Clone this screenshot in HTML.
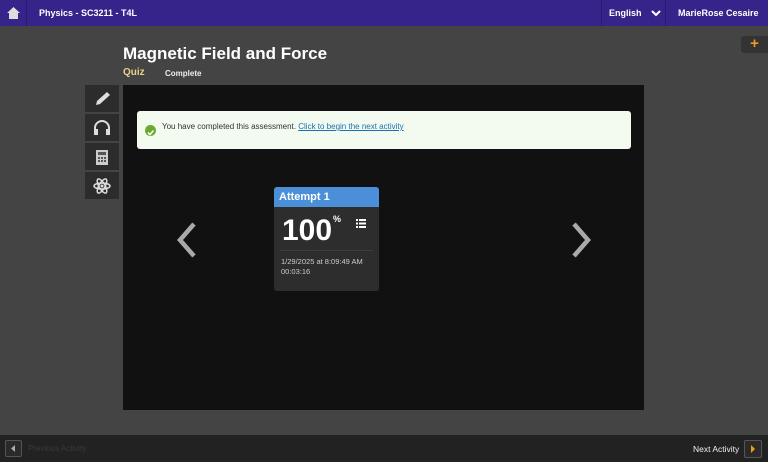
<!DOCTYPE html>
<html><head><style>
*{margin:0;padding:0;box-sizing:border-box}
body{width:768px;height:462px;background:#444;font-family:"Liberation Sans",sans-serif;position:relative;overflow:hidden}
.top{position:absolute;left:0;top:0;width:768px;height:26px;background:#36248a;color:#fff;font-size:9px;font-weight:bold}
.top div{position:absolute;top:0;height:26px;line-height:26px}
.sep{border-left:1px solid #2a1a70}
.abs{position:absolute}
.tool{position:absolute;left:85px;width:34px;height:28px;background:#2c2c2c;border-bottom:1px solid #444}
.bot{position:absolute;left:0;top:435px;width:768px;height:27px;background:#222}
</style></head><body>
<div class="top">
<div style="left:0;width:27px;border-right:1px solid #2a1a70"><svg width="27" height="26"><path d="M7 13 L13.5 7 L20 13 L18 13 L18 19 L9 19 L9 13Z" fill="#ddd"/></svg></div>
<div style="left:39px">Physics - SC3211 - T4L</div>
<div class="sep" style="left:601px;width:64px;padding-left:7px">English</div>
<svg class="abs" style="left:651px;top:9px" width="10" height="8"><path d="M1 2 L5 6 L9 2" stroke="#fff" stroke-width="2" fill="none"/></svg>
<div class="sep" style="left:665px;width:103px;padding-left:12px">MarieRose Cesaire</div>
</div>
<div class="abs" style="left:741px;top:36px;width:27px;height:17px;background:#333;border-radius:3px 0 0 3px;color:#f39b1e;font-weight:bold;font-size:15px;line-height:16px;text-align:center">+</div>
<div class="abs" style="left:123px;top:44px;color:#fff;font-size:17px;font-weight:bold">Magnetic Field and Force</div>
<div class="abs" style="left:123px;top:67px;color:#e6d38d;font-size:10px;font-weight:bold">Quiz</div>
<div class="abs" style="left:165px;top:69px;color:#eee;font-size:8px;font-weight:bold">Complete</div>
<div class="abs" style="left:123px;top:85px;width:521px;height:325px;background:#111"></div>
<div class="tool" style="top:85px"><svg width="34" height="28"><path d="M11 20 L12 16 L22 7 L25 10 L15 19Z" fill="#ddd"/></svg></div>
<div class="tool" style="top:114px"><svg width="34" height="28"><path d="M10 19 V14 A7 7 0 0 1 24 14 V19" stroke="#ddd" stroke-width="2" fill="none"/><rect x="9" y="15" width="4" height="6" fill="#ddd"/><rect x="21" y="15" width="4" height="6" fill="#ddd"/></svg></div>
<div class="tool" style="top:143px"><svg width="34" height="28"><rect x="11" y="7" width="12" height="15" fill="#ccc"/><rect x="13" y="9" width="8" height="3" fill="#555"/><g fill="#555"><rect x="13" y="14" width="2" height="2"/><rect x="16" y="14" width="2" height="2"/><rect x="19" y="14" width="2" height="2"/><rect x="13" y="17" width="2" height="2"/><rect x="16" y="17" width="2" height="2"/><rect x="19" y="17" width="2" height="2"/></g></svg></div>
<div class="tool" style="top:172px"><svg width="34" height="28"><g stroke="#ddd" stroke-width="1.5" fill="none"><ellipse cx="17" cy="14" rx="8" ry="3"/><ellipse cx="17" cy="14" rx="8" ry="3" transform="rotate(60 17 14)"/><ellipse cx="17" cy="14" rx="8" ry="3" transform="rotate(120 17 14)"/></g><circle cx="17" cy="14" r="1.5" fill="#ddd"/></svg></div>
<div class="abs" style="left:137px;top:111px;width:494px;height:38px;background:#f3faf0;border-radius:3px;font-size:8px;color:#333;line-height:31px;padding-left:25px">You have completed this assessment. <span style="color:#1a6fb5;text-decoration:underline">Click to begin the next activity</span></div>
<div class="abs" style="left:145px;top:125px;width:11px;height:11px;border-radius:50%;background:#6aab2e"><svg width="11" height="11"><path d="M3 5.5 L5 7.5 L8.5 3.5" stroke="#fff" stroke-width="1.5" fill="none"/></svg></div>
<svg class="abs" style="left:176px;top:222px" width="22" height="36"><path d="M18 2 L4 18 L18 34" stroke="#aaa" stroke-width="4.5" fill="none"/></svg>
<svg class="abs" style="left:570px;top:222px" width="22" height="36"><path d="M4 2 L18 18 L4 34" stroke="#aaa" stroke-width="4.5" fill="none"/></svg>
<div class="abs" style="left:274px;top:187px;width:105px;height:104px;background:#2d2d2d;border-radius:3px;overflow:hidden">
<div style="height:20px;background:#4b8fd8;color:#fff;font-weight:bold;font-size:11px;line-height:20px;padding-left:5px">Attempt 1</div>
<div class="abs" style="left:8px;top:27px;color:#fff;font-size:30px;font-weight:bold">100</div>
<div class="abs" style="left:59px;top:27px;color:#fff;font-size:9px;font-weight:bold">%</div>
<svg class="abs" style="left:82px;top:32px" width="10" height="9"><g fill="#fff"><rect x="0" y="0" width="2" height="2"/><rect x="3" y="0" width="7" height="2"/><rect x="0" y="3.5" width="2" height="2"/><rect x="3" y="3.5" width="7" height="2"/><rect x="0" y="7" width="2" height="2"/><rect x="3" y="7" width="7" height="2"/></g></svg>
<div class="abs" style="left:6px;top:63px;width:93px;border-top:1px solid #3e3e3e"></div>
<div class="abs" style="left:7px;top:70px;color:#ccc;font-size:7.5px;line-height:10px">1/29/2025 at 8:09:49 AM<br>00:03:16</div>
</div>
<div class="bot">
<div class="abs" style="left:5px;top:5px;width:17px;height:17px;border:1px solid #555;border-radius:2px;background:#2a2a2a"><svg width="15" height="15"><path d="M9 4 L5 7.5 L9 11Z" fill="#aaa"/></svg></div>
<div class="abs" style="left:28px;top:9px;color:#3a3a3a;font-size:8px">Previous Activity</div>
<div class="abs" style="left:693px;top:9px;color:#eee;font-size:8.5px">Next Activity</div>
<div class="abs" style="left:744px;top:5px;width:18px;height:18px;border:1px solid #555;border-radius:2px;background:#2a2a2a"><svg width="16" height="16"><path d="M6 4 L10 8 L6 12Z" fill="#f39b1e"/></svg></div>
</div>
</body></html>
